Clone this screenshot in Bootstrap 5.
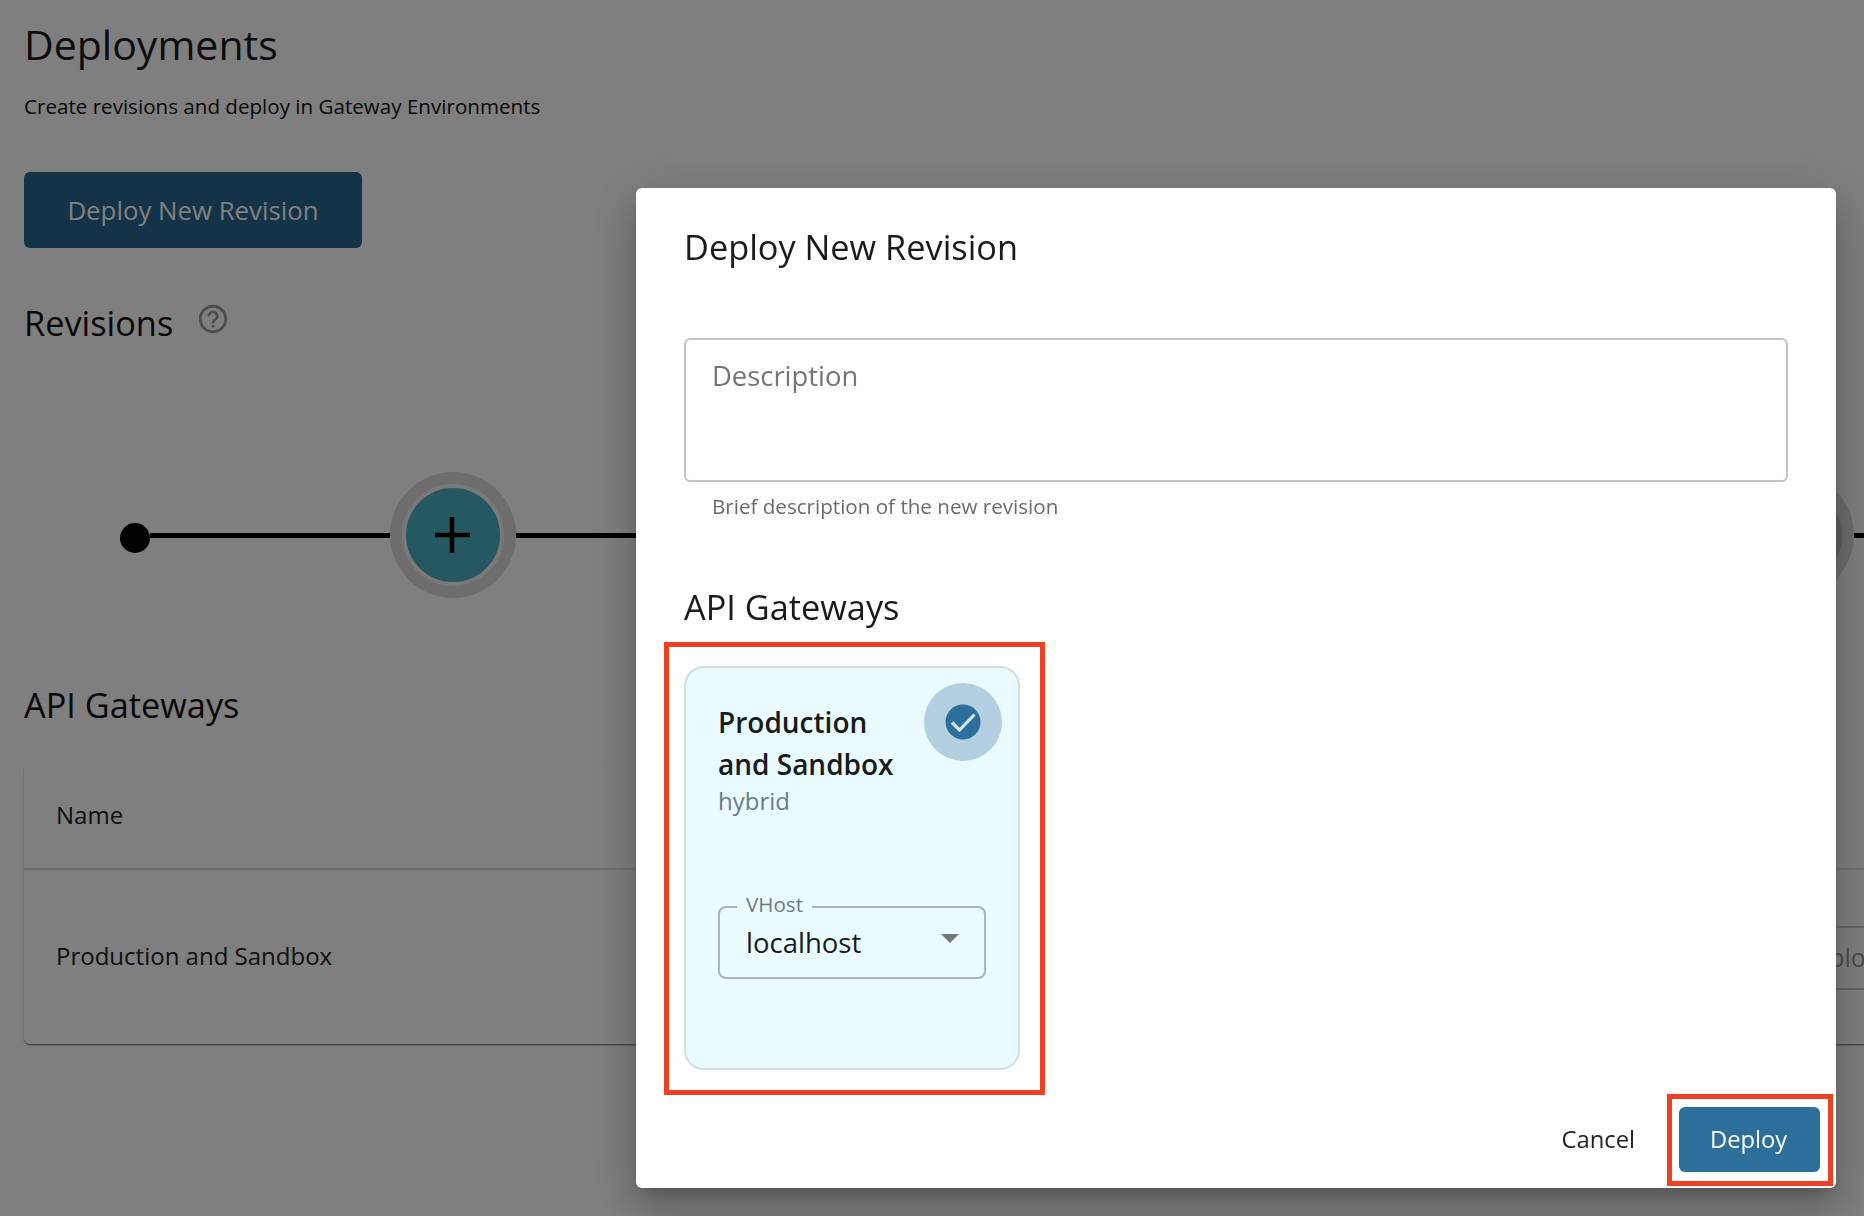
<!DOCTYPE html>
<html lang="en">
<head>
<meta charset="utf-8">
<title>Deployments</title>
<link href="https://cdn.jsdelivr.net/npm/bootstrap@5.3.0/dist/css/bootstrap.min.css" rel="stylesheet">
<style>
html,body{height:100%;overflow:hidden}
body{font-family:"Open Sans","Noto Sans",sans-serif;color:#1a1a1a;background:#fff}
.pg{width:1864px;height:1216px;padding:21px 0 0 24px;overflow:hidden}
.pg-title{font-size:41px;line-height:46px;font-weight:400;margin:0 0 25px}
.pg-sub{font-size:20.6px;line-height:28px;margin:0 0 52px;color:#111}
.pg-btn{width:338px;height:76px;background:#28668f;color:#fff;border:0;border-radius:6px;font-size:25.8px;padding:0}
.sec-title{font-size:34.3px;line-height:42px;font-weight:400;margin:0;color:#111}
.hlp{width:34px;height:34px;fill:#9a9a9a;margin:-8px 0 0 23px}
.rev-head{margin:54px 0 0}
.tl{height:126px;margin:128px 0 0 96px}
.tl-dot{width:30px;height:30px;border-radius:50%;background:#000;flex:none;margin-top:5px}
.tl-line{height:5px;background:#000;flex:none}
.tl-ring{width:126px;height:126px;border-radius:50%;background:#dbdbdb;flex:none}
.tl-core{width:102px;height:102px;border-radius:50%;background:#4ab0c0;border:4px solid #f2f2f2}
.tl-core.off{background:#bdbdbd;border:0}
.gw-title{margin:86px 0 0}
.gw-table{width:1900px;height:281px;margin-top:37px;border-radius:6px;box-shadow:0 2px 2px -1px rgba(0,0,0,.45),0 1px 1px rgba(0,0,0,.14),0 1px 3px rgba(0,0,0,.12);font-size:24px;background:#fff;color:#222}
.gw-head{height:107px;padding:0 0 2px 32px;border-bottom:2px solid #ddd}
.gw-row{height:171px;padding-left:32px}
.gw-name{width:1711px;flex:none}
.gw-out{height:64px;border:2px solid #c8c8c8;border-radius:6px;background:transparent;padding:0 28px;font-size:25px;color:#9a9a9a;margin-top:4px}
.dlg.modal-content{position:fixed;left:636px;top:188px;width:1200px;height:1000px;border:0;border-radius:6px;padding:0 48px;z-index:1060;background:#fff;box-shadow:0 11px 15px -7px rgba(0,0,0,.2),0 24px 38px 3px rgba(0,0,0,.14),0 9px 46px 8px rgba(0,0,0,.12);color:#1a1a1a}
.dlg-title{font-size:34.3px;line-height:44px;font-weight:400;margin:37px 0 0}
.dlg-area{height:144px;border:2px solid #c4c4c4;border-radius:6px;margin-top:69px;padding:18px 26px;font-size:27.4px;line-height:36px;color:#757575}
.dlg-help{font-size:20.6px;line-height:28px;color:#6b6b6b;margin:10px 0 0 28px}
.dlg-sub{font-size:34.3px;line-height:44px;margin:65px 0 0;font-weight:400}
.gw-card{width:336px;height:404px;margin-top:37px;background:#e9fbfe;border:2px solid #cfdfe2;border-radius:20px;padding:33px 32px 0 32px;position:relative}
.gw-card h3{font-size:28px;line-height:42px;font-weight:600;margin:0;width:190px;color:#1a1a1a}
.gw-type{font-size:24px;line-height:32px;color:#6f7b7f}
.chk{width:78px;height:78px;position:absolute;right:16px;top:15px}
.vh{margin:89px 0 0;height:73px;border:2px solid #aab3b6;border-radius:8px;padding:0 26px;position:relative;font-size:27.5px;line-height:69px;color:#1a1a1a}
.vh-lbl{position:absolute;left:17px;top:-16px;padding:0 9px;background:#e9fbfe;font-size:20.6px;line-height:24px;color:#6f7b7f}
.vh-arr{position:absolute;right:25px;top:26px;width:0;height:0;border-left:9px solid transparent;border-right:9px solid transparent;border-top:9px solid #767676}
.dlg-foot{margin:37px -32px 0 0}
.btn-cancel{font-size:23.8px;color:#222;background:none;border:0;padding:0;margin-right:44px}
.btn-dep{width:141px;height:65px;border:0;border-radius:6px;background:#2d6f9b;color:#fff;font-size:23.7px;padding:0 2px 0 0}
.mark-box{position:fixed;border:5px solid #ee4023;z-index:1070;pointer-events:none}
.mb-a{left:664px;top:642px;width:381px;height:453px}
.mb-b{left:1667px;top:1094px;width:166px;height:92px}
</style>
</head>
<body>
<main class="pg">
  <h1 class="pg-title">Deployments</h1>
  <p class="pg-sub">Create revisions and deploy in Gateway Environments</p>
  <button class="pg-btn d-block" type="button">Deploy New Revision</button>
  <div class="d-flex align-items-center rev-head">
    <h2 class="sec-title">Revisions</h2>
    <svg class="hlp" viewBox="0 0 24 24"><path d="M11 18h2v-2h-2v2zm1-16C6.48 2 2 6.48 2 12s4.48 10 10 10 10-4.48 10-10S17.52 2 12 2zm0 18c-4.41 0-8-3.59-8-8s3.59-8 8-8 8 3.59 8 8-3.59 8-8 8zm0-14c-2.21 0-4 1.79-4 4h2c0-1.1.9-2 2-2s2 .9 2 2c0 2-3 1.75-3 5h2c0-2.25 3-2.5 3-5 0-2.21-1.79-4-4-4z"/></svg>
  </div>
  <div class="tl d-flex align-items-center">
    <span class="tl-dot"></span>
    <span class="tl-line" style="width:240px"></span>
    <span class="tl-ring d-flex align-items-center justify-content-center">
      <span class="tl-core d-flex align-items-center justify-content-center">
        <svg width="36" height="36" viewBox="0 0 36 36"><path d="M17 0v36M0 18h35" stroke="#000" stroke-width="4.5" fill="none"/></svg>
      </span>
    </span>
    <span class="tl-line" style="width:1212px"></span>
    <span class="tl-ring d-flex align-items-center justify-content-center"><span class="tl-core off"></span></span>
    <span class="tl-line" style="width:40px"></span>
  </div>
  <h2 class="sec-title gw-title">API Gateways</h2>
  <div class="gw-table">
    <div class="gw-head d-flex align-items-center">Name</div>
    <div class="gw-row d-flex align-items-center">
      <span class="gw-name">Production and Sandbox</span>
      <button class="gw-out" type="button">Deploy</button>
    </div>
  </div>
</main>
<div class="modal-backdrop show"></div>
<div class="modal-content dlg">
  <h2 class="dlg-title">Deploy New Revision</h2>
  <div class="dlg-area">Description</div>
  <div class="dlg-help">Brief description of the new revision</div>
  <h3 class="dlg-sub">API Gateways</h3>
  <div class="gw-card">
    <h3>Production and Sandbox</h3>
    <div class="gw-type">hybrid</div>
    <svg class="chk" viewBox="0 0 78 78"><circle cx="39" cy="39" r="39" fill="#b4d0e0"/><circle cx="39" cy="39" r="17.5" fill="#2d6f9b"/><path d="M28 39.5l7.5 7.5L50.5 31.5" fill="none" stroke="#d5e4ed" stroke-width="3.2"/></svg>
    <div class="vh"><span class="vh-lbl">VHost</span>localhost<span class="vh-arr"></span></div>
  </div>
  <div class="dlg-foot d-flex justify-content-end align-items-center">
    <button class="btn-cancel" type="button">Cancel</button>
    <button class="btn-dep" type="button">Deploy</button>
  </div>
</div>
<div class="mark-box mb-a"></div>
<div class="mark-box mb-b"></div>
<script src="https://cdn.jsdelivr.net/npm/bootstrap@5.3.0/dist/js/bootstrap.bundle.min.js"></script>
</body>
</html>
